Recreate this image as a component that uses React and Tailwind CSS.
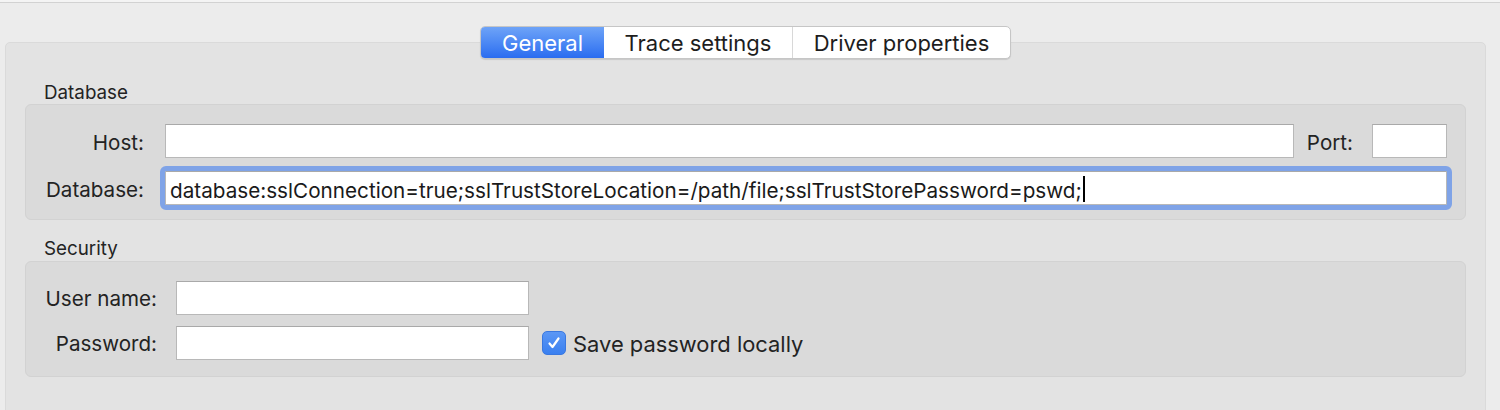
import React from 'react';

const font = { fontFamily: 'Inter, "Liberation Sans", sans-serif' };

function Field({ className = '', children }) {
  return (
    <div className={`h-[34px] bg-white border border-[#b8b8b8] border-t-[#a9a9a9] flex items-center ${className}`}>
      {children}
    </div>
  );
}

function Tabs() {
  return (
    <div className="flex justify-center -mt-[17px]">
      <div className="flex h-[33px] rounded-[5px] border border-[#c6c6c6] bg-white shadow-[0_1px_1px_rgba(0,0,0,0.12)] overflow-hidden text-[22px] text-[#1d1d1d]">
        <div className="w-[123px] pt-[2px] flex items-center justify-center text-white bg-gradient-to-b from-[#6ea3f7] to-[#2a6cf0]">General</div>
        <div className="w-[189px] pt-[2px] flex items-center justify-center border-r border-[#d8d8d8]">Trace settings</div>
        <div className="w-[217px] pt-[2px] flex items-center justify-center">Driver properties</div>
      </div>
    </div>
  );
}

export default function App() {
  return (
    <div style={font} className="w-[1500px] h-[410px] bg-[#ececec] overflow-hidden text-[#232323]">
      <div className="h-[2px] bg-[#f4f4f4]" />
      <div className="h-px bg-[#d2d2d2]" />
      <div className="ml-[5px] mt-[39px] w-[1481px] h-[400px] bg-[#e3e3e3] border border-[#dadada] rounded-[5px] px-[19px]">
        <Tabs />

        <div className="h-[45px] flex items-center pl-[19px] pt-[24px] text-[18.8px]">Database</div>
        <div className="h-[116px] bg-[#dadada] border border-[#d2d2d2] rounded-[6px] pt-[19px] pr-[18px] text-[20.6px]">
          <div className="flex items-center">
            <div className="w-[119px] text-right pr-[1px] pt-[4px]">Host:</div>
            <Field className="ml-[20px] flex-1" />
            <div className="ml-[13px] mr-[19px] pt-[4px]">Port:</div>
            <Field className="w-[75px]" />
          </div>
          <div className="flex items-center mt-[12px]">
            <div className="w-[119px] text-right pr-[1px] pt-[4px]">Database:</div>
            <Field className="ml-[20px] flex-1 border-[#7aa0e6] outline-[5px] outline-[#7fa3e7] rounded-[1px] pl-[4px] text-[20.7px] text-[#1a1a1a]">
              <span className="whitespace-nowrap pt-[4px]">database:sslConnection=true;sslTrustStoreLocation=/path/file;sslTrustStorePassword=pswd;</span>
              <span className="w-[2px] h-[26px] bg-black ml-[1px] mt-[2px]" />
            </Field>
          </div>
        </div>

        <div className="h-[41px] flex items-center pl-[19px] pt-[17px] text-[18.8px]">Security</div>
        <div className="h-[116px] bg-[#dadada] border border-[#d2d2d2] rounded-[6px] pt-[19px] text-[20.6px]">
          <div className="flex items-center">
            <div className="w-[131px] text-right pt-[3px]">User name:</div>
            <Field className="ml-[19px] w-[353px]" />
          </div>
          <div className="flex items-center mt-[11px]">
            <div className="w-[131px] text-right pt-[3px]">Password:</div>
            <Field className="ml-[19px] w-[353px]" />
            <div className="ml-[13px] w-[24px] h-[24px] rounded-[5px] bg-gradient-to-b from-[#5b97f5] to-[#3a80f0] border border-[#3a78e0] flex items-center justify-center">
              <svg width="16" height="16" viewBox="0 0 16 16" fill="none">
                <path d="M3.5 8.5 L6.5 12 L12.5 3.5" stroke="white" strokeWidth="2.2" strokeLinecap="round" strokeLinejoin="round" />
              </svg>
            </div>
            <div className="ml-[7px] pt-[2px] text-[21.9px]">Save password locally</div>
          </div>
        </div>
      </div>
    </div>
  );
}
